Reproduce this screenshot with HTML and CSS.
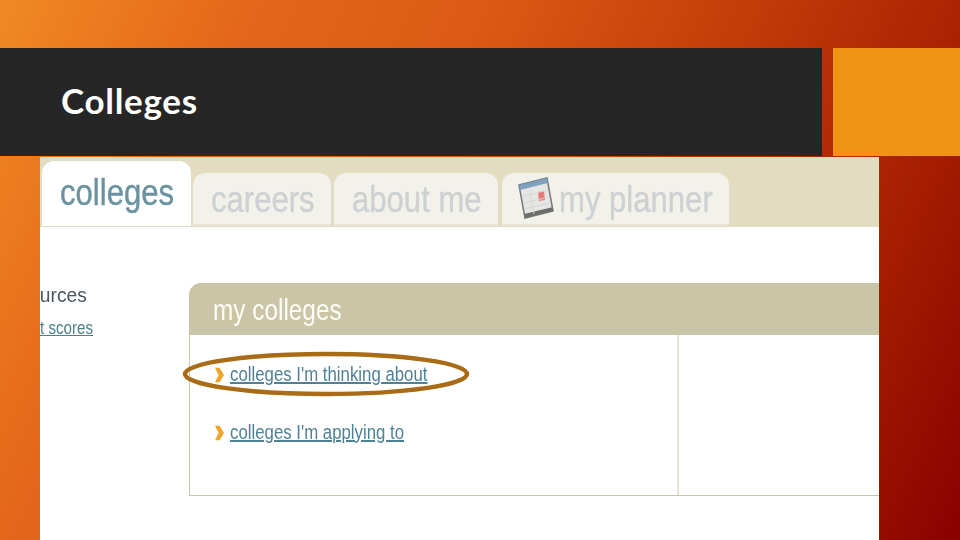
FILE: index.html
```html
<!DOCTYPE html>
<html lang="en">
<head>
    <meta charset="UTF-8">
    <meta name="viewport" content="width=device-width, initial-scale=1.0">
    <title>Colleges</title>
    <link rel="stylesheet" href="styles.css">
</head>
<body>
    <div class="slide">
        <header class="title-row">
            <div class="title-bar">
                <h1>Colleges</h1>
            </div>
            <div class="accent"></div>
        </header>

        <div class="shot">
            <nav class="tabs">
                <div class="tab active"><span class="tab-label">colleges</span></div>
                <div class="tab careers"><span class="tab-label">careers</span></div>
                <div class="tab about"><span class="tab-label">about me</span></div>
                <div class="tab planner">
                    <svg class="planner-icon" viewBox="0 0 36 44" width="36" height="44">
                        <polygon points="1,8 29,1 35,34 7,41" fill="#e6e6e4" stroke="#77797a" stroke-width="1.5"/>
                        <polygon points="1,8 29,1 30,6 2,13" fill="#7f9fbe"/>
                        <polygon points="6,37 35,30 35,34 7,41" fill="#6d6d6b"/>
                        <polygon points="20,15 26,14 27,23 21,24" fill="#e8787c"/>
                        <path d="M5 19 L30 13 M6 26 L31 20 M7 32 L32 26 M12 13 L16 37" stroke="#d6d6d4" stroke-width="1" fill="none"/>
                    </svg>
                    <span class="tab-label">my planner</span>
                </div>
            </nav>

            <div class="content">
                <aside class="sidebar">
                    <div class="side-heading"><span>resources</span></div>
                    <div class="side-link"><a>test scores</a></div>
                </aside>

                <section class="panel">
                    <div class="panel-head"><h2>my colleges</h2></div>
                    <div class="panel-body">
                        <ul class="links">
                            <li>
                                <svg class="chevron" viewBox="0 0 10 16" width="9" height="16"><path d="M0 0 L5 0 L10 8 L5 16 L0 16 L4 8 Z" fill="#eea52a"/></svg>
                                <a>colleges I'm thinking about</a>
                            </li>
                            <li>
                                <svg class="chevron" viewBox="0 0 10 16" width="9" height="16"><path d="M0 0 L5 0 L10 8 L5 16 L0 16 L4 8 Z" fill="#eea52a"/></svg>
                                <a>colleges I'm applying to</a>
                            </li>
                        </ul>
                        <div class="panel-side"></div>
                    </div>

                    <!-- hand drawn circle around the first link -->
                    <svg class="oval" viewBox="0 0 288 48" width="288" height="48">
                        <ellipse cx="144" cy="24" rx="141" ry="20" fill="none" stroke="#a96b15" stroke-width="4.5"/>
                    </svg>
                </section>
            </div>
        </div>
    </div>
</body>
</html>
```

FILE: styles.css
```css
body {
    margin: 0;
    width: 960px;
    height: 540px;
    overflow: hidden;
}

.slide {
    width: 960px;
    height: 540px;
    padding-top: 48px;
    box-sizing: border-box;
    overflow: hidden;
    font-family: 'Liberation Sans', Arial, sans-serif;
    background: linear-gradient(115deg, #f08a24 0%, #e4661a 21%, #dc5a14 40%, #c63f0a 60%, #ac2402 79%, #8a0000 100%);
}

/* Title row */
.title-row {
    display: flex;
    justify-content: space-between;
    height: 108px;
}

.title-bar {
    width: 822px;
    background: #262626;
    display: flex;
    align-items: center;
    padding-left: 61px;
    box-sizing: border-box;
}

.title-bar h1 {
    margin: 0 0 4px;
    font-family: 'Lato', sans-serif;
    font-size: 35px;
    font-weight: 700;
    letter-spacing: 0.7px;
    color: #fff;
}

.accent {
    width: 127px;
    background: #f09415;
}

/* Screenshot */
.shot {
    width: 839px;
    height: 384px;
    margin: 1px 0 0 40px;
    background: #fff;
    overflow: hidden;
}

.tabs {
    height: 70px;
    background: #e2dcc0;
    border-bottom: 1px solid #e2dcc0;
    display: flex;
    align-items: flex-end;
    gap: 3px;
    padding-left: 2px;
    box-sizing: border-box;
}

.tab {
    height: 53px;
    background: #f2f1ea;
    border-radius: 12px 12px 0 0;
    border-bottom: 2px solid #e8e6da;
    box-sizing: border-box;
    display: flex;
    align-items: center;
    padding-left: 18px;
    width: 138px;
}

.tab.active {
    height: 65px;
    width: 149px;
    background: #fff;
    border-bottom: 0;
    margin-right: -1px;
}

.tab.about {
    width: 164px;
}

.tab.planner {
    width: 227px;
    padding-left: 16px;
    margin-left: 1px;
}

.tab-label {
    display: inline-block;
    margin-top: 2px;
    font-size: 37px;
    color: #cdd1d2;
    -webkit-text-stroke: 0.4px #cdd1d2;
    transform: scaleX(0.84);
    transform-origin: left center;
    white-space: nowrap;
    filter: blur(0.4px);
}

.tab.active .tab-label {
    margin-top: 0;
    margin-bottom: 1px;
    color: #6a929f;
    -webkit-text-stroke: 0.4px #6a929f;
}

.planner-icon {
    flex: none;
    margin-right: 5px;
    filter: blur(0.5px);
}

/* Page body */
.content {
    display: flex;
    padding-top: 56px;
}

.sidebar {
    width: 149px;
    flex: none;
    padding-top: 1px;
    filter: blur(0.3px);
}

.side-heading,
.side-link {
    display: flex;
    justify-content: flex-end;
    overflow: hidden;
    white-space: nowrap;
}

.side-heading {
    width: 47px;
    height: 22px;
    font-size: 20px;
    color: #4a5560;
    line-height: 22px;
}

.side-heading span {
    display: inline-block;
    transform: scaleX(0.96);
    transform-origin: right center;
}

.side-link {
    width: 53px;
    height: 22px;
    margin-top: 12px;
    font-size: 18px;
    line-height: 21px;
    color: #4d7f8d;
}

.side-link a {
    display: inline-block;
    height: 21px;
    text-decoration: underline;
    transform: scaleX(0.84);
    transform-origin: right center;
}

.panel {
    position: relative;
    flex: 1;
}

.panel-head {
    height: 52px;
    background: #c9c5a6;
    border-radius: 12px 0 0 0;
    display: flex;
    align-items: center;
    padding-left: 24px;
}

.panel-head h2 {
    margin: 2px 0 0;
    font-size: 29px;
    font-weight: normal;
    color: #fdfdf6;
    transform: scaleX(0.84);
    transform-origin: left center;
    white-space: nowrap;
    filter: blur(0.3px);
}

.panel-body {
    height: 161px;
    display: flex;
    box-sizing: border-box;
    border-left: 1px solid #c9c5a6;
    border-bottom: 1px solid #c9c5a6;
}

.links {
    list-style: none;
    margin: 0;
    padding: 28px 0 0 25px;
    width: 489px;
    box-sizing: border-box;
    border-right: 2px solid #e6e3d4;
    display: flex;
    flex-direction: column;
    gap: 35px;
}

.links li {
    display: flex;
    align-items: center;
    height: 23px;
    gap: 6px;
}

.chevron {
    flex: none;
}

.links a {
    display: inline-block;
    font-size: 20px;
    line-height: 23px;
    color: #4f8196;
    text-decoration: underline;
    white-space: nowrap;
    transform: scaleX(0.84);
    transform-origin: left center;
    filter: blur(0.3px);
}

.panel-side {
    flex: 1;
}

.oval {
    position: absolute;
    left: -7px;
    top: 67px;
}
```
